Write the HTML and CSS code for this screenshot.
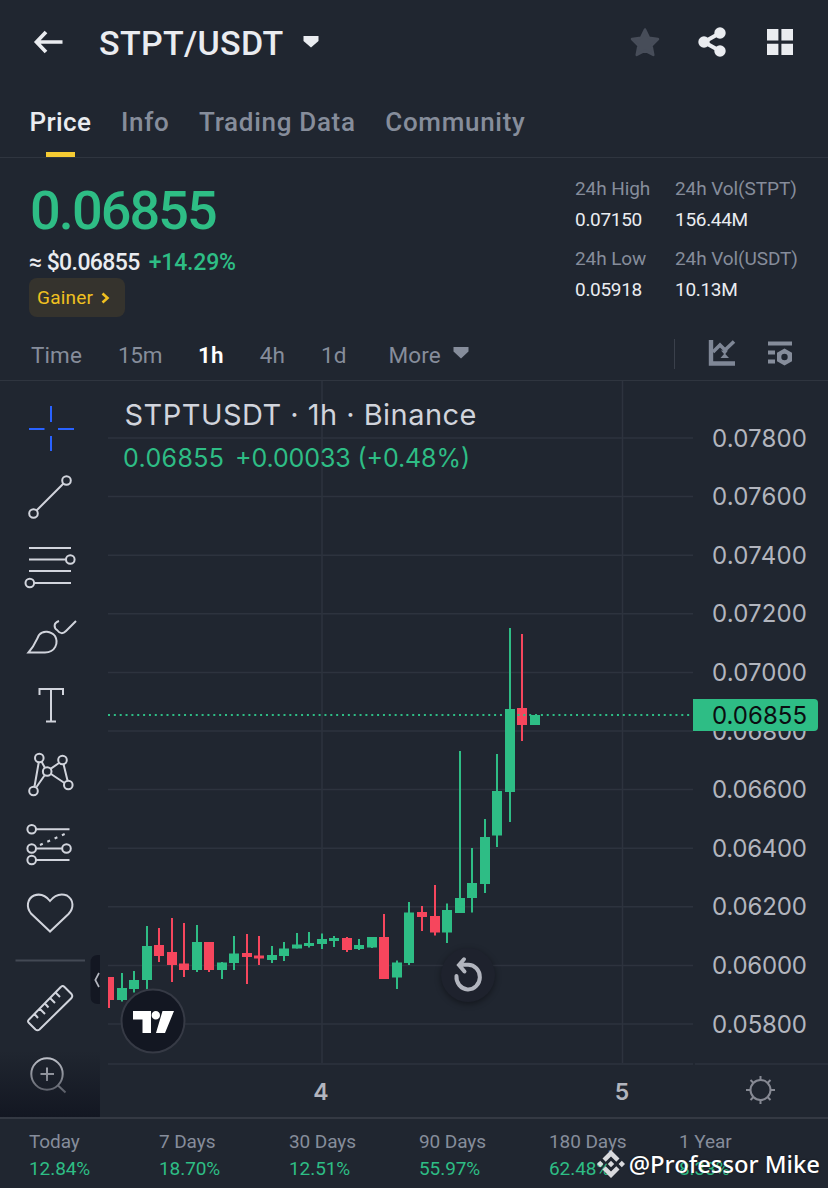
FILE: index.html
```
<!DOCTYPE html>
<html lang="en">
<head>
    <meta charset="UTF-8">
    <meta name="viewport" content="width=device-width, initial-scale=1.0">
    <title>STPT/USDT</title>
    <link rel="stylesheet" href="styles.css">
</head>
<body>

<header class="topbar">
    <svg class="back" width="30" height="26" viewBox="0 0 30 26"><path d="M29.500 13H4M13 3L3.500 13L13 23" fill="none" stroke="#eaecf0" stroke-width="3.700"/></svg>
    <h1>STPT/USDT</h1>
    <svg class="caret" width="16" height="12" viewBox="0 0 16 12"><path d="M0.500 0H15.500V5L8 11.500L0.500 5Z" fill="#eaecf0"/></svg>
    <div class="actions">
        <svg width="30" height="30" viewBox="0 0 30 30"><path d="M15 2.500L19 10.800L28 12L21.500 18.500L23.300 28L15 23.700L6.700 28L8.500 18.500L2 12L11 10.800Z" fill="#474d59" stroke="#474d59" stroke-width="2.500" stroke-linejoin="round"/></svg>
        <svg width="30" height="30" viewBox="0 0 30 30"><path d="M22 6L6 15L22 24" fill="none" stroke="#eaecf0" stroke-width="4"/><g fill="#eaecf0"><circle cx="22" cy="6" r="5.700"/><circle cx="6" cy="15" r="5.700"/><circle cx="22" cy="24" r="5.700"/></g></svg>
        <svg width="30" height="30" viewBox="0 0 30 30"><path d="M2 2H13.400V13.400H2ZM16.400 2H28V13.400H16.400ZM2 16.800H13.400V28H2ZM16.400 16.800H28V28H16.400Z" fill="#eaecf0"/></svg>
    </div>
</header>

<nav class="tabs">
    <a class="active">Price</a>
    <a>Info</a>
    <a>Trading Data</a>
    <a>Community</a>
</nav>

<section class="summary">
    <div class="price-box">
        <div class="price">0.06855</div>
        <div class="sub"><span class="approx">≈ $0.06855</span><span class="up">+14.29%</span></div>
        <div class="tag">Gainer <svg width="9" height="12" viewBox="0 0 9 12"><path d="M1.500 1.500L6.500 6L1.500 10.500" fill="none" stroke="#f0c020" stroke-width="2.600"/></svg></div>
    </div>
    <dl class="stats">
        <div><dt>24h High</dt><dd>0.07150</dd></div>
        <div><dt>24h Vol(STPT)</dt><dd>156.44M</dd></div>
        <div><dt>24h Low</dt><dd>0.05918</dd></div>
        <div><dt>24h Vol(USDT)</dt><dd>10.13M</dd></div>
    </dl>
</section>

<div class="intervals">
    <span>Time</span>
    <span>15m</span>
    <span class="active">1h</span>
    <span>4h</span>
    <span>1d</span>
    <span class="more">More <svg width="16" height="12" viewBox="0 0 16 12"><path d="M0.500 0H15.500V4.500L8 11.500L0.500 4.500Z" fill="#868d9b"/></svg></span>
    <div class="tools">
        <svg width="28" height="28" viewBox="0 0 28 28"><path d="M3 0V23.500H27" fill="none" stroke="#7f8796" stroke-width="4.400"/><path d="M5 12L12 5L17 10L26 1.500" fill="none" stroke="#7f8796" stroke-width="3.600"/><path d="M13 10.500H20L17.300 14L21 18H12.500L16 14Z" fill="#7f8796"/></svg>
        <svg width="28" height="28" viewBox="0 0 28 28"><path d="M2 1.500H26V5.500H2ZM2 10.500H9V14.500H2ZM2 19.500H9V23.500H2Z" fill="#868d9b"/><path fill-rule="evenodd" d="M18.500 8.500L26 12.800V21.200L18.500 25.500L11 21.200V12.800ZM18.500 13.800A3.200 3.200 0 1 0 18.500 20.200A3.200 3.200 0 1 0 18.500 13.800Z" fill="#868d9b"/></svg>
    </div>
</div>

<main class="chart">
    <aside class="drawbar">
        <svg viewBox="0 0 100 736" width="100" height="736">
            <defs>
                <linearGradient id="fade" x1="0" y1="0" x2="0" y2="1">
                    <stop offset="0" stop-color="#131722" stop-opacity="0"/>
                    <stop offset="1" stop-color="#131722"/>
                </linearGradient>
            </defs>
            <g class="icon">
                <!-- crosshair -->
                <path class="blue" d="M51 25V41M51 55V70M29 48H44.500M58 48H74"/>
                <!-- trend line -->
                <path d="M36.500 129.500L63.500 102.500"/><circle cx="33.500" cy="132.500" r="4.300"/><circle cx="66.500" cy="99.500" r="4.300"/>
                <!-- fib levels -->
                <path d="M29 167H71M29 178.500H66M29 190H71M34 202H71"/><circle cx="70.300" cy="178.500" r="4.300"/><circle cx="29.800" cy="202" r="4.300"/>
                <!-- brush -->
                <path d="M28.500 271.500C35 264 36 260 39 254C43 249 51 250 55 255C59 262 55 271.500 45 271.500ZM59 240C53 242 54 247 57 249C60 253 63 253 66 250L76 240"/>
                <!-- text -->
                <path d="M39.500 314V308H63V314M51 308V340.500M46 340.500H56"/>
                <!-- pattern -->
                <path d="M38.800 381L34.500 405.500M41.500 380.500L45 387M50.500 387.800L59 382M63.500 383L67.500 399.500M51 393L64.500 402M44.500 394.500L36.500 406"/>
                <circle cx="39.300" cy="377" r="4.300"/><circle cx="62.500" cy="379" r="4.300"/><circle cx="47.200" cy="390.500" r="4.300"/><circle cx="33.500" cy="410" r="4.300"/><circle cx="68.300" cy="404" r="4.300"/>
                <!-- forecast -->
                <path d="M36 448.300H69.500M36 467.500H62M36 479H69.500"/><path d="M40 464L67 452" stroke-dasharray="3 5"/>
                <circle cx="31.700" cy="448.300" r="4.300"/><circle cx="31.700" cy="467.500" r="4.300"/><circle cx="66.500" cy="467.500" r="4.300"/><circle cx="31.700" cy="479" r="4.300"/>
                <!-- heart -->
                <path d="M50 550.500L31 532.500C26 526 27 518 34 514.500C41 512 46 515 50 520C54 515 60 512 67 514.500C74 519 74 527 68.500 533Z"/>
                <path class="rule" d="M15.500 579.500H85"/>
                <!-- ruler -->
                <path d="M29 638.500L60.500 606.300Q62.500 604 64.500 606L71.500 613Q73 615 71.500 617L39.500 648.500Q37.500 650 35.500 648.500L29 642Q27 640 29 638.500ZM34.500 633L38 637M40 628L45 633M45 622.500L48.500 626.500M50.500 617.500L55 622M56 612L60 616"/>
                <!-- zoom -->
                <circle cx="47" cy="693" r="15.700"/><path d="M40.500 693H54M47 686.500V700M58 704.500L65.500 711.500"/>
            </g>
            <rect y="670" width="100" height="66" fill="url(#fade)"/>
            <path d="M100 574H98Q90.500 574 90.500 582V615Q90.500 623 98 623H100Z" fill="#131722"/>
            <path d="M99 592L95.300 599L99 606" fill="none" stroke="#b2b5be" stroke-width="1.700"/>
        </svg>
    </aside>
    <svg class="plot" viewBox="100 381 728 736" width="728" height="736">
        <g id="grid" class="grid"></g>
        <g id="candles"></g>
        <path class="last-line" d="M108 715H693"/>
        <text class="legend-title" x="124.500" y="425" textLength="352">STPTUSDT · 1h · Binance</text>
        <text class="legend-value" x="123" y="466.500" textLength="101">0.06855</text>
        <text class="legend-value" x="235" y="466.500" textLength="235">+0.00033 (+0.48%)</text>
        <g id="scale" class="scale"></g>
        <path d="M693 699H814Q818 699 818 703V727Q818 731 814 731H693Z" fill="#2ebd85"/>
        <text class="last-value" x="712" y="723.500" textLength="95">0.06855</text>
        <text class="day" x="321" y="1100">4</text>
        <text class="day" x="622" y="1100">5</text>
        <g fill="none" stroke="#868993" stroke-width="2">
            <circle cx="760.500" cy="1090" r="10"/>
            <path d="M760.500 1080V1076M760.500 1100V1104M750.500 1090H746M770.500 1090H775M753.500 1083L750.500 1080M767.500 1083L770.500 1080M753.500 1097L750.500 1100M767.500 1097L770.500 1100"/>
        </g>
        <!-- TradingView badge -->
        <circle cx="153" cy="1021" r="31.500" fill="#131722" stroke="#363a45" stroke-width="2"/>
        <path d="M133 1011H151V1033H142.500V1019.500H133ZM162.500 1011H174L165 1033H156ZM160 1015.300A4.200 4.200 0 1 1 151.600 1015.300A4.200 4.200 0 1 1 160 1015.300Z" fill="#fff"/>
        <!-- reset zoom -->
        <circle class="reset" cx="468" cy="975" r="27"/>
        <path d="M456.500 976A11.700 12.300 0 1 0 468 964.800H461M464 959.300L459 965L464.500 971.500" fill="none" stroke="#b2b5be" stroke-width="4" stroke-linecap="round"/>
    </svg>
</main>

<footer class="periods">
    <div><span>Today</span><b>12.84%</b></div>
    <div><span>7 Days</span><b>18.70%</b></div>
    <div><span>30 Days</span><b>12.51%</b></div>
    <div><span>90 Days</span><b>55.97%</b></div>
    <div><span>180 Days</span><b>62.48%</b></div>
    <div><span>1 Year</span><b>8.33%</b></div>
</footer>

<div class="watermark">
    <svg width="28" height="28" viewBox="0 0 28 28"><path d="M14 0L22.500 8.500L19.300 11.700L14 6.400L8.700 11.700L5.500 8.500ZM14 28L22.500 19.500L19.300 16.300L14 21.600L8.700 16.300L5.500 19.500ZM3.200 10.800L6.400 14L3.200 17.200L0 14ZM24.800 10.800L28 14L24.800 17.200L21.600 14ZM14 10.800L17.200 14L14 17.200L10.800 14Z" fill="#d9dadd"/></svg>
    <span>@Professor Mike</span>
</div>

<script src="chart.js"></script>
</body>
</html>
```
FILE: styles.css
```
* {
    box-sizing: border-box;
}
body {
    margin: 0;
    width: 828px;
    height: 1188px;
    overflow: hidden;
    position: relative;
    background-color: #202630;
    color: #eaecf0;
    font-family: Roboto, sans-serif;
    display: flex;
    flex-direction: column;
}
svg {
    display: block;
    flex: none;
}
.topbar {
    height: 86px;
    padding: 0 33px 2px;
    display: flex;
    align-items: center;
}
h1 {
    margin: 2px 19px 0 36px;
    width: 185px;
    font-size: 34px;
    font-weight: 500;
    letter-spacing: 0.3px;
    white-space: nowrap;
}
.actions {
    margin-left: auto;
    display: flex;
    gap: 37.500px;
}
.tabs {
    height: 72px;
    padding: 0 29.500px;
    display: flex;
    gap: 29.500px;
    border-bottom: 1px solid #2f353f;
    font-size: 26px;
    font-weight: 500;
    line-height: 73px;
    letter-spacing: 0.7px;
    color: #868d9b;
}
.tabs .active {
    color: #eaecf0;
    letter-spacing: 0.4px;
    display: flex;
    flex-direction: column;
    align-items: center;
}
.tabs .active::after {
    content: "";
    width: 29px;
    height: 5px;
    margin-top: -7px;
    background: #f5cb33;
}
.summary {
    height: 167px;
    padding: 0 30px;
    display: flex;
    justify-content: space-between;
}
.price {
    margin-top: 22px;
    font-size: 54px;
    line-height: 62px;
    font-weight: 500;
    letter-spacing: -1.900px;
    color: #2ebd85;
}
.sub {
    display: flex;
    gap: 9px;
    margin: 7px 0 0 -1px;
    font-size: 23px;
    line-height: 28px;
    font-weight: 500;
    letter-spacing: -0.600px;
}
.up {
    color: #2ebd85;
    letter-spacing: -0.200px;
}
.tag {
    width: 96px;
    height: 39px;
    margin: 1px 0 0 -1px;
    padding-left: 8px;
    border-radius: 8px;
    display: flex;
    align-items: center;
    gap: 8px;
    background: #35332d;
    color: #f0c020;
    font-size: 19px;
    letter-spacing: 0.2px;
}
.stats {
    width: 223px;
    margin: 15px 0 0;
    display: grid;
    grid-template-columns: 100px 123px;
    grid-auto-rows: 69.500px;
    font-size: 19px;
    line-height: 31px;
    white-space: nowrap;
}
.stats dt {
    color: #868d9b;
    letter-spacing: -0.080px;
}
.stats dd {
    margin: 0;
    letter-spacing: -0.300px;
}
.intervals {
    height: 56px;
    padding: 2px 34px 0 31px;
    border-bottom: 1px solid #2f353f;
    display: flex;
    align-items: center;
    gap: 36px;
    font-size: 22.500px;
    letter-spacing: 0.1px;
    color: #868d9b;
}
.intervals span {
    padding-top: 2px;
}
.intervals span:nth-child(2) {
    letter-spacing: -0.300px;
}
.intervals .active {
    color: #fff;
    font-weight: 600;
}
.more {
    margin-left: 6px;
    display: flex;
    align-items: center;
    gap: 12px;
}
.more svg {
    margin-top: -3px;
}
.tools {
    margin-left: auto;
    padding-left: 33px;
    height: 30px;
    border-left: 1px solid #3a404b;
    display: flex;
    align-items: center;
    gap: 30px;
}
.chart {
    height: 736px;
    display: flex;
}
.plot,
.drawbar {
    flex: none;
}
.icon {
    fill: none;
    stroke: #d1d4dc;
    stroke-width: 2;
}
.icon .blue {
    stroke: #2962ff;
}
.icon .rule {
    stroke: #434954;
}
.grid {
    fill: none;
    stroke: #2d333e;
    stroke-width: 1.500;
}
.up-bar {
    fill: #2ebd85;
}
.down-bar {
    fill: #f6465d;
}
.last-line {
    stroke: #2ebd85;
    stroke-width: 2;
    stroke-dasharray: 2 3.850;
}
.plot text {
    font-family: Inter, sans-serif;
}
.legend-title {
    font-size: 29px;
    fill: #d1d4dc;
}
.legend-value {
    font-size: 25px;
    fill: #2ebd85;
}
.scale,
.last-value {
    font-size: 24px;
    fill: #b2b5be;
}
.plot .last-value {
    fill: #0b0e11;
}
.day {
    font-size: 23px;
    font-weight: 600;
    fill: #b2b5be;
    text-anchor: middle;
}
.reset {
    fill: #1e222d;
    filter: drop-shadow(0 2px 3px rgba(0, 0, 0, 0.4));
}
.periods {
    height: 71px;
    padding: 9px 0 0 29px;
    border-top: 2px solid #343943;
    display: grid;
    grid-template-columns: repeat(6, 130px);
    font-size: 19px;
    line-height: 27px;
    letter-spacing: -0.080px;
    white-space: nowrap;
}
.periods span {
    display: block;
    color: #868d9b;
}
.periods b {
    display: block;
    font-weight: 400;
    color: #2ebd85;
}
.watermark {
    position: absolute;
    right: 8px;
    bottom: 8px;
    display: flex;
    align-items: center;
    gap: 4px;
    font-family: "Noto Sans", sans-serif;
    font-size: 23.800px;
    line-height: 32px;
    font-weight: 500;
    color: #fff;
    white-space: nowrap;
    text-shadow: 0 0 2px rgba(0, 0, 0, 0.5);
}
```
FILE: chart.js
```
const GRID_STEP = 58.6;
const labels = ["0.07800", "0.07600", "0.07400", "0.07200", "0.07000", "0.06800",
    "0.06600", "0.06400", "0.06200", "0.06000", "0.05800"];

// x, high, body top, body bottom, low, direction
const candles = [
    [109, 977, 977, 1000, 1008, "down"],
    [122, 973, 988, 1000, 1001.5, "up"],
    [134, 971, 980, 989, 992.5, "up"],
    [147, 926, 946, 980, 991, "up"],
    [159, 928, 945, 956, 962, "down"],
    [172, 918, 952, 965, 982, "down"],
    [184, 923, 963.5, 970, 977, "down"],
    [197, 925, 942, 970, 972, "up"],
    [209, 942, 942, 970, 972, "down"],
    [222, 962, 962.5, 970, 979, "up"],
    [234, 936, 953.5, 963, 970, "up"],
    [247, 934, 953, 957, 984, "down"],
    [259, 936, 955.5, 958.5, 965, "down"],
    [272, 946, 955, 960, 963, "up"],
    [284, 942, 948.5, 956, 961, "up"],
    [297, 933, 944.5, 948.5, 948.5, "up"],
    [309, 932, 943, 946, 947.5, "up"],
    [322, 933.5, 939, 944, 949, "up"],
    [334, 936, 938, 941, 947, "up"],
    [347, 937, 938, 950, 952, "down"],
    [359, 939, 945, 949, 950, "up"],
    [372, 937, 937, 947.5, 948, "up"],
    [384, 914, 937, 979, 979, "down"],
    [397, 960.5, 962.5, 977.5, 989, "up"],
    [409, 902, 912.5, 963, 965, "up"],
    [422, 906, 912, 917, 931, "down"],
    [435, 885, 916, 932.5, 935.5, "down"],
    [447, 903.5, 910, 932.5, 943, "up"],
    [460, 751, 898, 913, 913, "up"],
    [472, 848, 883, 898, 912.5, "up"],
    [485, 819, 837, 884, 893, "up"],
    [497, 754, 791, 835.5, 847, "up"],
    [510, 628, 709, 792, 822, "up"],
    [522, 634, 708, 725, 741, "down"],
    [535, 715, 715, 725, 725, "up"]
];

function drawGrid() {
    let lines = "";
    let texts = "";
    labels.forEach((label, i) => {
        const y = 438 + i * GRID_STEP;
        lines += `<path d="M108 ${y}H693"/>`;
        texts += `<text x="712" y="${y + 8.5}" textLength="95">${label}</text>`;
    });
    lines += '<path d="M322 381V1063M622.5 381V1063M108 1064H693M695 1064H828"/>';
    document.getElementById("grid").innerHTML = lines;
    document.getElementById("scale").innerHTML = texts;
}

function drawCandles() {
    let out = "";
    candles.forEach(([x, high, top, bottom, low, dir]) => {
        const left = Math.max(x - 5, 108);
        out += `<g class="${dir}-bar">
            <rect x="${x - 1}" y="${high}" width="2" height="${low - high}"/>
            <rect x="${left}" y="${top}" width="${x + 5 - left}" height="${bottom - top}"/>
        </g>`;
    });
    document.getElementById("candles").innerHTML = out;
}

drawGrid();
drawCandles();
```
